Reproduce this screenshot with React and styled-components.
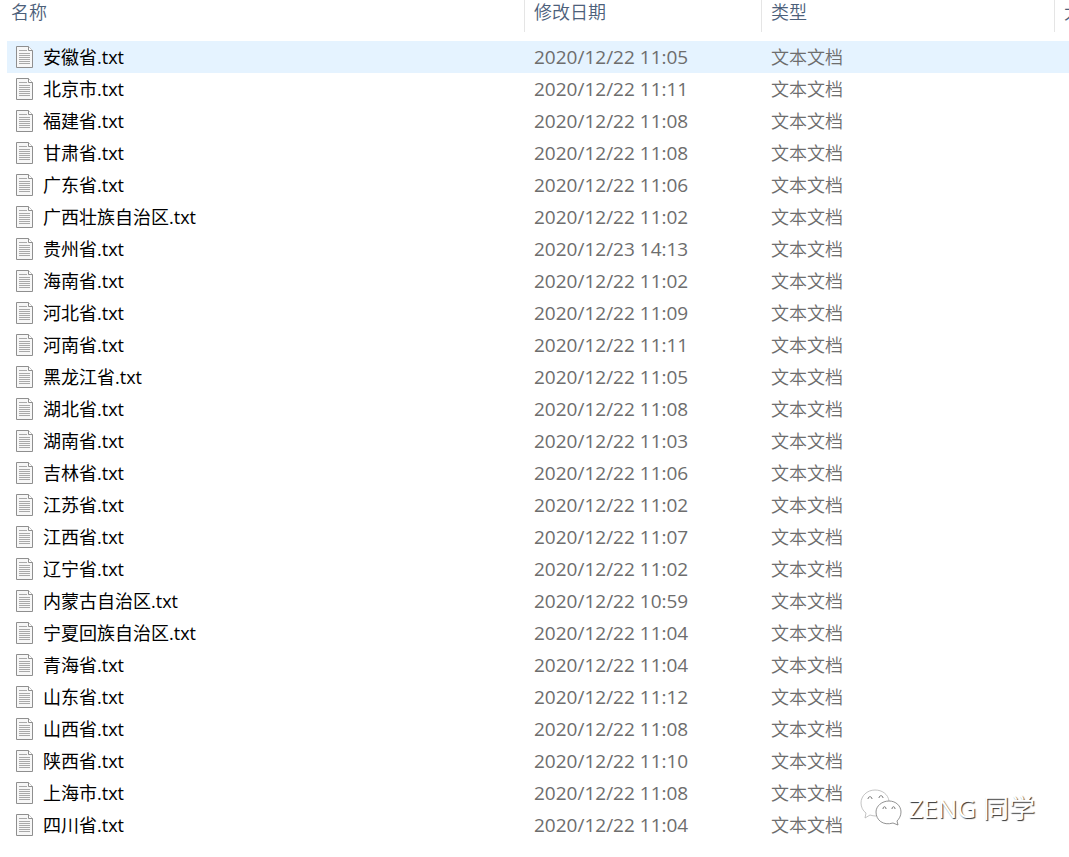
import React from "react";
import styled, { createGlobalStyle } from "styled-components";

const GlobalStyle = createGlobalStyle`
  body {
    margin: 0;
    background: #ffffff;
    font-family: "Open Sans", "Noto Sans CJK SC", sans-serif;
    overflow: hidden;
  }
`;

const Container = styled.main`
  position: relative;
  padding: 0 0 16px 7px;
`;

const Table = styled.table`
  width: 100%;
  table-layout: fixed;
  border-collapse: collapse;
  font-size: 18px;
  line-height: 24px;
  white-space: nowrap;
`;

const Column = styled.col`
  width: ${(props) => props.$width};
`;

const HeaderCell = styled.th`
  padding: 0 0 9px;
  color: #4c607a;
  font-weight: 350;
  text-align: left;
  overflow: hidden;
`;

const HeaderLabel = styled.div`
  box-sizing: border-box;
  height: 32px;
  padding: 0 0 0 ${(props) => (props.$first ? "4px" : "9px")};
  border-right: 1px solid #e5e5e5;

  ${HeaderCell}:last-child & {
    border-right: 0;
  }
`;

const Row = styled.tr`
  height: 32px;
  background: ${(props) => (props.$selected ? "#e5f3ff" : "transparent")};
`;

const Cell = styled.td`
  padding: 0 0 0 9px;
  color: #6d6d6d;
  font-size: ${(props) => (props.$date ? "19px" : "18px")};
  font-weight: ${(props) => (props.$date ? "400" : "350")};
`;

const FileName = styled.div`
  display: flex;
  align-items: center;
  gap: 9px;
  color: #000000;
  font-weight: 400;
`;

const Watermark = styled.div`
  position: absolute;
  right: 34px;
  bottom: 30px;
  display: flex;
  align-items: center;
  gap: 6px;
  color: #ffffff;
  font-size: 26px;
  line-height: 38px;
  text-shadow: 1px 1px 1px #333333;
  white-space: nowrap;
`;

const arquivos = [
  ["安徽省.txt", "2020/12/22 11:05"],
  ["北京市.txt", "2020/12/22 11:11"],
  ["福建省.txt", "2020/12/22 11:08"],
  ["甘肃省.txt", "2020/12/22 11:08"],
  ["广东省.txt", "2020/12/22 11:06"],
  ["广西壮族自治区.txt", "2020/12/22 11:02"],
  ["贵州省.txt", "2020/12/23 14:13"],
  ["海南省.txt", "2020/12/22 11:02"],
  ["河北省.txt", "2020/12/22 11:09"],
  ["河南省.txt", "2020/12/22 11:11"],
  ["黑龙江省.txt", "2020/12/22 11:05"],
  ["湖北省.txt", "2020/12/22 11:08"],
  ["湖南省.txt", "2020/12/22 11:03"],
  ["吉林省.txt", "2020/12/22 11:06"],
  ["江苏省.txt", "2020/12/22 11:02"],
  ["江西省.txt", "2020/12/22 11:07"],
  ["辽宁省.txt", "2020/12/22 11:02"],
  ["内蒙古自治区.txt", "2020/12/22 10:59"],
  ["宁夏回族自治区.txt", "2020/12/22 11:04"],
  ["青海省.txt", "2020/12/22 11:04"],
  ["山东省.txt", "2020/12/22 11:12"],
  ["山西省.txt", "2020/12/22 11:08"],
  ["陕西省.txt", "2020/12/22 11:10"],
  ["上海市.txt", "2020/12/22 11:08"],
  ["四川省.txt", "2020/12/22 11:04"],
];

const FileIcon = () => (
  <svg width="18" height="22" viewBox="0 0 18 22" fill="none" aria-hidden="true">
    <path d="M.5.5h12l4 4v17H.5z" fill="#f7f7f7" stroke="#8f8f8f" />
    <path d="M12.5.5v4h4" fill="#ffffff" stroke="#8f8f8f" />
    <path
      d="M3 4.5h8M3 7.5h11M3 9.5h11M3 11.5h11M3 13.5h11M3 15.5h11M3 17.5h11"
      stroke="#a9a9a9"
    />
  </svg>
);

const WechatIcon = () => (
  <svg width="42" height="38" viewBox="0 0 42 38" fill="none" aria-hidden="true">
    <path
      d="M16 27c-2 0-4-.3-6-1l-5 3 1-5C3 22 1 18 1 14 1 7 7 1 15 1c7 0 13 4 14 11"
      stroke="#b5b5b5"
      strokeWidth=".8"
    />
    <path
      d="M29 12c7 0 12 5 12 11 0 4-2 7-4 9l1 4-5-2c-10 3-17-3-17-11 0-6 6-11 13-11z"
      fill="#ffffff"
      stroke="#777777"
      strokeWidth=".8"
    />
    <path
      d="M8 10c0-3 4-3 4 0M19 9c0-3 4-3 4 0M23 20c0-3 3-3 3 0M32 20c0-3 3-3 3 0"
      stroke="#777777"
    />
  </svg>
);

export default class App extends React.Component {
  state = {
    selected: "安徽省.txt",
  };

  selectFile = (name) => {
    this.setState({ selected: name });
  };

  render() {
    return (
      <Container>
        <GlobalStyle />
        <Table>
          <colgroup>
            <Column $width="518px" />
            <Column $width="237px" />
            <Column $width="293px" />
            <Column $width="auto" />
          </colgroup>
          <thead>
            <tr>
              <HeaderCell scope="col">
                <HeaderLabel $first>名称</HeaderLabel>
              </HeaderCell>
              <HeaderCell scope="col">
                <HeaderLabel>修改日期</HeaderLabel>
              </HeaderCell>
              <HeaderCell scope="col">
                <HeaderLabel>类型</HeaderLabel>
              </HeaderCell>
              <HeaderCell scope="col">
                <HeaderLabel>大小</HeaderLabel>
              </HeaderCell>
            </tr>
          </thead>
          <tbody>
            {arquivos.map(([name, date]) => (
              <Row
                key={name}
                $selected={this.state.selected === name}
                onClick={() => this.selectFile(name)}
              >
                <Cell>
                  <FileName>
                    <FileIcon />
                    {name}
                  </FileName>
                </Cell>
                <Cell $date>{date}</Cell>
                <Cell>文本文档</Cell>
                <Cell />
              </Row>
            ))}
          </tbody>
        </Table>
        <Watermark>
          <WechatIcon />
          <span>ZENG 同学</span>
        </Watermark>
      </Container>
    );
  }
}
